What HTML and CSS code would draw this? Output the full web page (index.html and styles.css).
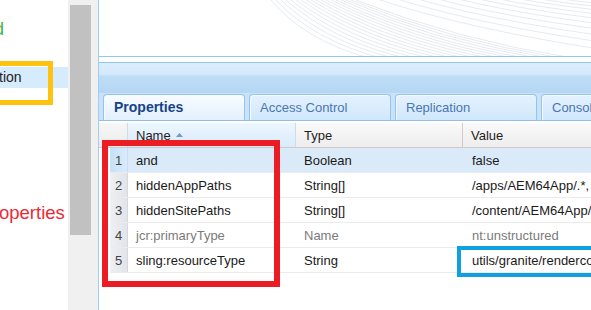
FILE: index.html
```html
<!DOCTYPE html>
<html>
<head>
<meta charset="utf-8">
<link rel="stylesheet" href="styles.css">
</head>
<body>
<div class="app">
  <aside class="left">
    <div class="l-green">d</div>
    <div class="l-row">tion</div>
    <div class="l-red">operties</div>
  </aside>
  <div class="scroll"><div class="thumb"></div></div>
  <main class="main">
    <div class="banner">
      <svg width="492" height="56" viewBox="0 0 492 56" fill="none" stroke="#e6ebf0" stroke-width="1">
        <path d="M172 0 Q205 40 270 58"/>
        <path d="M177 0 Q214 40 282 58"/>
        <path d="M182 0 Q223 40 294 58"/>
        <path d="M187 0 Q232 40 306 58"/>
        <path d="M192 0 Q241 40 318 58"/>
        <path d="M197 0 Q250 40 330 58"/>
        <path d="M202 0 Q259 40 342 58"/>
        <path d="M207 0 Q268 40 354 58"/>
        <path d="M212 0 Q277 40 366 58"/>
        <path d="M217 0 Q286 40 378 58"/>
        <path d="M222 0 Q295 40 390 58"/>
        <path d="M227 0 Q304 40 402 58"/>
        <path d="M232 0 Q313 40 414 58"/>
        <path d="M237 0 Q322 40 426 58"/>
        <path d="M242 0 Q331 40 438 58"/>
        <path d="M247 0 Q340 40 450 58"/>
        <path d="M252 0 Q349 40 462 58"/>
        <path d="M257 0 Q358 40 474 58"/>
        <path d="M275 -2 Q370 30 520 52"/>
        <path d="M295 -2 Q390 28 545 48"/>
        <path d="M315 -2 Q410 26 570 44"/>
        <path d="M335 -2 Q430 24 595 40"/>
        <path d="M355 -2 Q450 22 620 36"/>
        <path d="M375 -2 Q470 20 645 32"/>
        <path d="M395 -2 Q490 18 670 28"/>
        <path d="M415 -2 Q510 16 695 24"/>
        <path d="M435 -2 Q530 14 720 20"/>
        <path d="M455 -2 Q550 12 745 16"/>
      </svg>
    </div>
    <section class="panel">
      <div class="phead"></div>
      <div class="tabs">
        <div class="tab active">Properties</div>
        <div class="tab">Access Control</div>
        <div class="tab">Replication</div>
        <div class="tab">Console</div>
      </div>
      <div class="grid">
        <div class="ghead">
          <div class="hc hc-num"></div>
          <div class="hc hc-name">Name <svg class="sort" width="7" height="4" viewBox="0 0 7 4"><path d="M0 4 L3.5 0 L7 4 Z" fill="#6b9ad3"/></svg></div>
          <div class="hc hc-type">Type</div>
          <div class="hc hc-val">Value</div>
        </div>
        <div class="row sel">
          <div class="rn">1</div>
          <div class="rc rc-name">and</div>
          <div class="rc rc-type">Boolean</div>
          <div class="rc rc-val">false</div>
        </div>
        <div class="row">
          <div class="rn">2</div>
          <div class="rc rc-name">hiddenAppPaths</div>
          <div class="rc rc-type">String[]</div>
          <div class="rc rc-val">/apps/AEM64App/.*, /libs/.*</div>
        </div>
        <div class="row">
          <div class="rn">3</div>
          <div class="rc rc-name">hiddenSitePaths</div>
          <div class="rc rc-type">String[]</div>
          <div class="rc rc-val">/content/AEM64App/.*</div>
        </div>
        <div class="row muted">
          <div class="rn">4</div>
          <div class="rc rc-name">jcr:primaryType</div>
          <div class="rc rc-type">Name</div>
          <div class="rc rc-val">nt:unstructured</div>
        </div>
        <div class="row">
          <div class="rn">5</div>
          <div class="rc rc-name">sling:resourceType</div>
          <div class="rc rc-type">String</div>
          <div class="rc rc-val">utils/granite/rendercondition/simple</div>
        </div>
      </div>
    </section>
  </main>
  <div class="mark mark-yellow"></div>
  <div class="mark mark-red"></div>
  <div class="mark mark-blue"></div>
</div>
</body>
</html>
```

FILE: styles.css
```css
html, body {
  margin: 0;
  padding: 0;
}
body {
  width: 591px;
  height: 310px;
  overflow: hidden;
  background: #ffffff;
  font-family: "Liberation Sans", Arial, sans-serif;
}
.app {
  position: relative;
  display: flex;
  width: 591px;
  height: 310px;
  overflow: hidden;
}

/* left navigation */
.left {
  width: 68px;
  flex: none;
  display: flex;
  flex-direction: column;
  overflow: hidden;
  background: #ffffff;
}
.l-green {
  margin-top: 19px;
  margin-left: -6px;
  font-size: 18px;
  line-height: 20px;
  color: #3db54a;
}
.l-row {
  margin-top: 28px;
  height: 21px;
  line-height: 21px;
  font-size: 14px;
  color: #1e1e1e;
  background: #d6ebfb;
  text-indent: -1px;
  white-space: nowrap;
}
.l-red {
  margin-top: 115px;
  margin-left: -1px;
  font-size: 18.5px;
  line-height: 20px;
  color: #ec2a35;
  white-space: nowrap;
}

/* scrollbar */
.scroll {
  width: 30px;
  flex: none;
  background: #f0f0f0;
}
.thumb {
  margin: 5px 0 0 2px;
  width: 21px;
  height: 230px;
  background: #c1c1c1;
}

/* main area */
.main {
  flex: 1;
  min-width: 0;
  border-left: 1px solid #9fcdf3;
  display: flex;
  flex-direction: column;
}
.banner {
  height: 56px;
  border-bottom: 1px solid #8fc6f2;
  margin-bottom: 5px;
  overflow: hidden;
  background: #ffffff;
}
.banner svg {
  display: block;
}
.panel {
  flex: 1;
  border-top: 1px solid #8fc6f2;
}
.phead {
  height: 30px;
  background: linear-gradient(#dbeefd 0%, #d3e9fc 38%, #bedcf6 44%, #b5d7f4 100%);
}
.tabs {
  display: flex;
  gap: 4px;
  height: 26px;
  padding: 1px 0 0 4px;
  background: #c8e3f9;
  border-bottom: 1px solid #8fc0ea;
  overflow: hidden;
}
.tab {
  width: 142px;
  flex: none;
  box-sizing: border-box;
  height: 26px;
  padding-left: 10px;
  border: 1px solid #97c3eb;
  border-bottom: none;
  border-radius: 4px 4px 0 0;
  background: linear-gradient(#e5f2fe, #d0e7fb);
  box-shadow: inset 1px 1px 0 #f3f9ff;
  font-size: 13px;
  line-height: 25px;
  color: #4976b4;
  white-space: nowrap;
}
.tab.active {
  background: linear-gradient(#f8fcff, #e3f0fd);
  color: #15428b;
  font-weight: bold;
  font-size: 14px;
}

/* grid */
.grid {
  margin-top: 2px;
}
.ghead {
  display: flex;
  height: 24px;
  border-bottom: 1px solid #d6c9c5;
  background: linear-gradient(#fafafa, #ededed);
  font-size: 13px;
  color: #1e1e1e;
}
.hc {
  box-sizing: border-box;
  height: 24px;
  padding: 2px 0 0 8px;
  line-height: 22px;
  border-right: 1px solid #d4d4d4;
  white-space: nowrap;
}
.hc-num {
  width: 29px;
  padding: 0;
  border-right-color: #cbdcec;
  background: linear-gradient(#f6f6f6, #ececec);
}
.hc-name {
  width: 168px;
  background: linear-gradient(#edf6fe, #d9ebfb);
  border-right-color: #cfdbe6;
}
.sort {
  margin-left: 2px;
  vertical-align: 3px;
}
.hc-type {
  width: 167px;
  border-right-color: #d8c8c3;
}
.hc-val {
  flex: 1;
  border-right: none;
}

.row {
  display: flex;
  margin-left: 11px;
  height: 24px;
  border-bottom: 1px solid #ebebeb;
  font-size: 13px;
  color: #1a1a1a;
  white-space: nowrap;
}
.rn {
  width: 18px;
  flex: none;
  box-sizing: border-box;
  padding-top: 2px;
  line-height: 22px;
  text-align: center;
  color: #444444;
  background: linear-gradient(to right, #eef0f3, #e1e4e9);
  border-right: 1px solid #d6d8dc;
}
.rc {
  box-sizing: border-box;
  padding: 2px 0 0 8px;
  line-height: 22px;
  flex: none;
}
.rc-name {
  width: 168px;
}
.rc-type {
  width: 167px;
}
.rc-val {
  flex: 1;
  padding-left: 9px;
  overflow: hidden;
}
.row.sel {
  background: #dbeaf9;
}
.row.sel .rn {
  background: linear-gradient(to right, #c6e0f7, #d9ebfb);
  border-right-color: #c9def2;
}
.row.muted {
  color: #7b7b7b;
}

/* annotation frames drawn over the screenshot */
.mark {
  position: absolute;
  box-sizing: border-box;
  pointer-events: none;
}
.mark-yellow {
  left: -10px;
  top: 61px;
  width: 63px;
  height: 44px;
  border: 5px solid #ffc20e;
}
.mark-red {
  left: 102px;
  top: 140px;
  width: 178px;
  height: 147px;
  border: 6px solid #ec1c24;
}
.mark-blue {
  left: 457px;
  top: 246px;
  width: 160px;
  height: 31px;
  border: 4px solid #0ea0df;
}
```
